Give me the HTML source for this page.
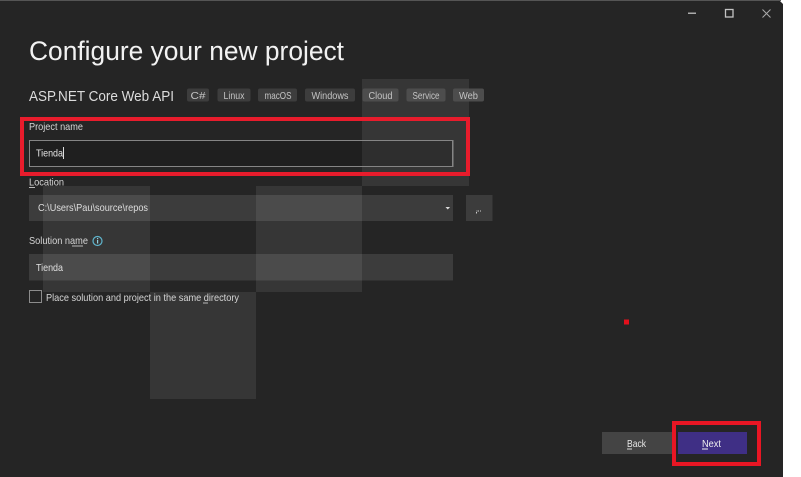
<!DOCTYPE html>
<html><head><meta charset="utf-8"><style>
html,body{margin:0;padding:0;background:#fff;width:801px;height:477px;overflow:hidden}
svg{display:block;position:absolute;left:0;top:0}
text{font-family:"Liberation Sans",sans-serif;fill:#d6d6d6;font-size:10.500px;filter:blur(.25px)}
.chip{font-size:10.500px;fill:#c4c4c4;text-anchor:middle}
</style></head><body>
<svg width="801" height="477" viewBox="0 0 801 477" xmlns="http://www.w3.org/2000/svg">
<path d="M0 0H779L783 4V477H0Z" fill="#252525"/>
<rect x="0" y="0" width="781" height="1" fill="#555"/>
<g fill="#fff" fill-opacity=".08">
<rect x="43" y="186" width="107" height="106"/>
<rect x="150" y="292" width="106" height="107"/>
<rect x="256" y="186" width="106" height="106"/>
<rect x="362" y="79" width="107" height="107"/>
</g>
<text x="29" y="60" style="font-size:27px;fill:#f2f2f2" textLength="315" lengthAdjust="spacingAndGlyphs">Configure your new project</text>
<text x="29" y="101" style="font-size:15px;fill:#dcdcdc" textLength="145" lengthAdjust="spacingAndGlyphs">ASP.NET Core Web API</text>
<g fill="#3d3d3d">
<rect x="187" y="88.500" width="22" height="13" rx="2"/>
<rect x="217.500" y="88.500" width="33" height="13" rx="2"/>
<rect x="258" y="88.500" width="39" height="13" rx="2"/>
<rect x="305" y="88.500" width="50" height="13" rx="2"/>
<rect x="362.500" y="88.500" width="36" height="13" rx="2" fill="#4d4d4d"/>
<rect x="406.500" y="88.500" width="39" height="13" rx="2" fill="#4d4d4d"/>
<rect x="453" y="88.500" width="31" height="13" rx="2" fill="#4d4d4d"/>
</g>
<text class="chip" x="198" y="99" textLength="15" lengthAdjust="spacingAndGlyphs">C#</text>
<text class="chip" x="234" y="99" textLength="21" lengthAdjust="spacingAndGlyphs">Linux</text>
<text class="chip" x="278" y="99" textLength="27" lengthAdjust="spacingAndGlyphs">macOS</text>
<text class="chip" x="330" y="99" textLength="37" lengthAdjust="spacingAndGlyphs">Windows</text>
<text class="chip" x="380.500" y="99" textLength="24" lengthAdjust="spacingAndGlyphs">Cloud</text>
<text class="chip" x="426" y="99" textLength="27" lengthAdjust="spacingAndGlyphs">Service</text>
<text class="chip" x="468.500" y="99" textLength="19" lengthAdjust="spacingAndGlyphs">Web</text>
<text x="29" y="130" textLength="54" lengthAdjust="spacingAndGlyphs">Project name</text>
<rect x="29.500" y="140.500" width="423.500" height="26" fill="#1e1e1e" fill-opacity=".75" stroke="#858585"/>
<rect x="362" y="141" width="90.500" height="25" fill="#2e2e2e"/>
<rect x="29" y="140" width="424" height="1" fill="#858585"/>
<rect x="29" y="166" width="424" height="1" fill="#858585"/>
<rect x="452" y="140" width="1" height="27" fill="#858585"/>
<text x="36" y="156.500" style="fill:#e6e6e6" textLength="27" lengthAdjust="spacingAndGlyphs">Tienda</text>
<rect x="63" y="147" width="1" height="12" fill="#ddd"/>
<text x="29" y="185.500" textLength="35" lengthAdjust="spacingAndGlyphs">Location</text>
<rect x="29" y="187" width="6" height="1" fill="#bbb"/>
<rect x="29" y="195" width="424" height="26" fill="#fff" fill-opacity=".105"/>
<text x="38" y="211" style="fill:#dedede" textLength="110" lengthAdjust="spacingAndGlyphs">C:\Users\Pau\source\repos</text>
<path d="M445.500 207H450L447.750 209.500Z" fill="#ddd"/>
<rect x="466" y="195" width="26.500" height="26" fill="#fff" fill-opacity=".105"/>
<g fill="#ccc"><rect x="476" y="212" width="1" height="1.500"/><rect x="478" y="210.500" width="1" height="1"/><rect x="480" y="210.500" width="1" height="1"/><rect x="476.500" y="210.500" width="1" height="1"/></g>
<text x="29" y="244" textLength="59" lengthAdjust="spacingAndGlyphs">Solution name</text>
<rect x="72" y="245.500" width="11" height="1" fill="#bbb"/>
<circle cx="97.500" cy="241" r="4.500" fill="none" stroke="#5fb4cc" stroke-width="1.200"/>
<rect x="97" y="240" width="1.200" height="3.500" fill="#8fd0e0"/><rect x="97" y="238" width="1.200" height="1.200" fill="#8fd0e0"/>
<rect x="29" y="254" width="424" height="26.500" fill="#fff" fill-opacity=".105"/>
<text x="36" y="271" style="fill:#e0e0e0" textLength="27" lengthAdjust="spacingAndGlyphs">Tienda</text>
<rect x="29.500" y="290.500" width="12" height="12" fill="none" stroke="#8c8c8c"/>
<text x="46" y="301" textLength="193" lengthAdjust="spacingAndGlyphs">Place solution and project in the same directory</text>
<rect x="203" y="302.500" width="5" height="1" fill="#bbb"/>
<rect x="624" y="319.500" width="5" height="5" fill="#e3101c"/>
<rect x="602" y="432" width="70" height="22" fill="#444"/>
<text x="627" y="447" style="fill:#e8e8e8" textLength="19" lengthAdjust="spacingAndGlyphs">Back</text>
<rect x="627" y="448.500" width="5" height="1" fill="#ddd"/>
<rect x="678" y="432" width="69" height="22" fill="#3f2f85"/>
<text x="702" y="447" style="fill:#f0f0f0" textLength="19" lengthAdjust="spacingAndGlyphs">Next</text>
<rect x="702" y="448.500" width="6" height="1" fill="#eee"/>
<rect x="22" y="119" width="446" height="55" fill="none" stroke="#e81c2c" stroke-width="4"/>
<rect x="674" y="423" width="85" height="41" fill="none" stroke="#e81624" stroke-width="4"/>
<rect x="688" y="12.500" width="8" height="1.500" fill="#aaa"/>
<rect x="725.500" y="9.500" width="7.500" height="7.500" fill="none" stroke="#c4c4c4" stroke-width="1.300"/>
<path d="M762.500 9.500L770.500 17.500M770.500 9.500L762.500 17.500" stroke="#aaa" stroke-width="1" fill="none"/>
</svg>
</body></html>
